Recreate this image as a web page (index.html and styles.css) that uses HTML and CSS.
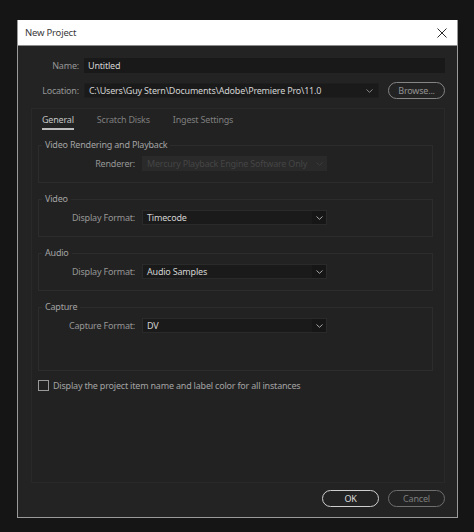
FILE: index.html
```html
<!DOCTYPE html>
<html lang="en">
<head>
  <meta charset="UTF-8">
  <meta name="viewport" content="width=device-width, initial-scale=1.0">
  <title>New Project</title>
  <link rel="stylesheet" href="styles.css">
</head>
<body>
  <div class="dialog">
    <div class="titlebar">
      <span class="title">New Project</span>
      <svg class="close" width="10" height="10" viewBox="0 0 10 10">
        <path d="M0.5 0.5 L9.5 9.5 M9.5 0.5 L0.5 9.5" stroke="#2b2b2b" stroke-width="1" fill="none"/>
      </svg>
    </div>

    <div class="content">
      <div class="row">
        <label class="label">Name:</label>
        <div class="input name-input">Untitled</div>
      </div>
      <div class="row">
        <label class="label">Location:</label>
        <div class="select location-select">
          <span>C:\Users\Guy Stern\Documents\Adobe\Premiere Pro\11.0</span>
          <span class="chevron plain"><svg width="7" height="4" viewBox="0 0 7 4"><path d="M0.5 0.5 L3.5 3.3 L6.5 0.5" stroke="#8a8a8a" stroke-width="1" fill="none"/></svg></span>
        </div>
        <button class="btn browse">Browse...</button>
      </div>

      <div class="panel">
        <div class="tabs">
          <span class="tab active">General</span>
          <span class="tab">Scratch Disks</span>
          <span class="tab">Ingest Settings</span>
        </div>

        <fieldset class="group">
          <legend>Video Rendering and Playback</legend>
          <div class="group-row">
            <label class="label">Renderer:</label>
            <div class="select disabled">
              <span>Mercury Playback Engine Software Only</span>
              <span class="chevron"><svg width="7" height="4" viewBox="0 0 7 4"><path d="M0.5 0.5 L3.5 3.3 L6.5 0.5" stroke="#3c3c3c" stroke-width="1" fill="none"/></svg></span>
            </div>
          </div>
        </fieldset>

        <fieldset class="group">
          <legend>Video</legend>
          <div class="group-row">
            <label class="label">Display Format:</label>
            <div class="select">
              <span>Timecode</span>
              <span class="chevron"><svg width="7" height="4" viewBox="0 0 7 4"><path d="M0.5 0.5 L3.5 3.3 L6.5 0.5" stroke="#a8a8a8" stroke-width="1" fill="none"/></svg></span>
            </div>
          </div>
        </fieldset>

        <fieldset class="group">
          <legend>Audio</legend>
          <div class="group-row">
            <label class="label">Display Format:</label>
            <div class="select">
              <span>Audio Samples</span>
              <span class="chevron"><svg width="7" height="4" viewBox="0 0 7 4"><path d="M0.5 0.5 L3.5 3.3 L6.5 0.5" stroke="#a8a8a8" stroke-width="1" fill="none"/></svg></span>
            </div>
          </div>
        </fieldset>

        <fieldset class="group capture">
          <legend>Capture</legend>
          <div class="group-row">
            <label class="label">Capture Format:</label>
            <div class="select">
              <span>DV</span>
              <span class="chevron"><svg width="7" height="4" viewBox="0 0 7 4"><path d="M0.5 0.5 L3.5 3.3 L6.5 0.5" stroke="#a8a8a8" stroke-width="1" fill="none"/></svg></span>
            </div>
          </div>
        </fieldset>

        <div class="check-row">
          <span class="checkbox"></span>
          <span>Display the project item name and label color for all instances</span>
        </div>
      </div>

      <div class="actions">
        <button class="btn ok">OK</button>
        <button class="btn cancel">Cancel</button>
      </div>
    </div>
  </div>
</body>
</html>
```

FILE: styles.css
```css
html, body {
  margin: 0;
  background-color: #151515;
}
body {
  font-family: 'Noto Sans', 'Open Sans', sans-serif;
  font-size: 9px;
  letter-spacing: -0.2px;
  height: 532px;
  overflow: hidden;
  padding-top: 20px;
  box-sizing: border-box;
}
.dialog {
  margin-left: 17px;
  width: 441px;
  height: 498px;
  box-sizing: border-box;
  border: 1px solid #9a9a9a;
  border-top: none;
  background-color: #232323;
  display: flex;
  flex-direction: column;
}
.titlebar {
  height: 25px;
  background-color: #ffffff;
  border-bottom: 1px solid #8c8c8c;
  display: flex;
  align-items: center;
  justify-content: space-between;
  padding: 0 10px 0 7px;
  flex-shrink: 0;
}
.title {
  color: #3a3a3a;
  font-size: 9.5px;
}
.content {
  flex: 1;
  padding: 12px 12px 0 13px;
  display: flex;
  flex-direction: column;
}
.row {
  display: flex;
  align-items: center;
  height: 15px;
  margin-bottom: 10px;
}
.row .label {
  width: 48px;
  text-align: right;
  margin-right: 5px;
}
.label {
  color: #969696;
  white-space: nowrap;
}
.input {
  flex: 1;
  height: 15px;
  line-height: 15px;
  background-color: #191919;
  color: #d2d2d2;
  padding-left: 4px;
}
.select {
  display: flex;
  align-items: center;
  justify-content: space-between;
  height: 15px;
  box-sizing: border-box;
  background-color: #1a1a1a;
  border: 1px solid #2a2a2a;
  color: #d2d2d2;
  padding-left: 4px;
  white-space: nowrap;
  overflow: hidden;
}
.location-select {
  width: 296px;
  border-color: #1e1e1e;
}
.chevron {
  width: 14px;
  height: 13px;
  display: flex;
  align-items: center;
  justify-content: center;
  background-color: #161616;
  flex-shrink: 0;
}
.chevron.plain {
  background-color: transparent;
  margin-right: 2px;
}
.btn {
  font-family: inherit;
  font-size: 9px;
  letter-spacing: -0.2px;
  height: 17px;
  width: 57px;
  padding: 0;
  border-radius: 9px;
  background-color: #232323;
  color: #929292;
  border: 1.5px solid #858585;
}
.browse {
  margin-left: 9px;
}
.panel {
  height: 375px;
  box-sizing: border-box;
  border: 1px solid #292929;
  background-color: #222222;
  padding: 0 11px 0 6px;
  display: flex;
  flex-direction: column;
}
.tabs {
  display: flex;
  gap: 23px;
  padding: 4px 0 0 4px;
  height: 25px;
  box-sizing: border-box;
  margin-bottom: 5px;
}
.tab {
  color: #7e7e7e;
  height: 15px;
}
.tab.active {
  color: #c4c4c4;
  border-bottom: 2px solid #bdbdbd;
}
.group {
  margin: 0 0 10px 0;
  padding: 5px 0 11px 0;
  border: 1px solid #2c2c2c;
  min-width: 0;
}
.group legend {
  color: #a2a2a2;
  line-height: 12px;
  padding: 0 3px;
  margin-left: 3px;
}
.group-row {
  display: flex;
  align-items: center;
}
.group-row .label {
  width: 96px;
  text-align: right;
  margin-right: 7px;
}
.group-row .select {
  width: 185px;
}
.select.disabled {
  background-color: #2a2a2a;
  border-color: #2a2a2a;
  color: #454545;
}
.select.disabled .chevron {
  background-color: #2a2a2a;
}
.capture {
  padding-bottom: 37px;
}
.check-row {
  display: flex;
  align-items: center;
  color: #a2a2a2;
  margin-top: -2px;
}
.checkbox {
  width: 9px;
  height: 9px;
  border: 1px solid #9a9a9a;
  margin-right: 4px;
}
.actions {
  display: flex;
  justify-content: flex-end;
  gap: 9px;
  margin-top: 7px;
}
.ok {
  color: #dcdcdc;
  border-color: #cfcfcf;
}
.cancel {
  color: #7e7e7e;
  border-color: #6e6e6e;
}
```
